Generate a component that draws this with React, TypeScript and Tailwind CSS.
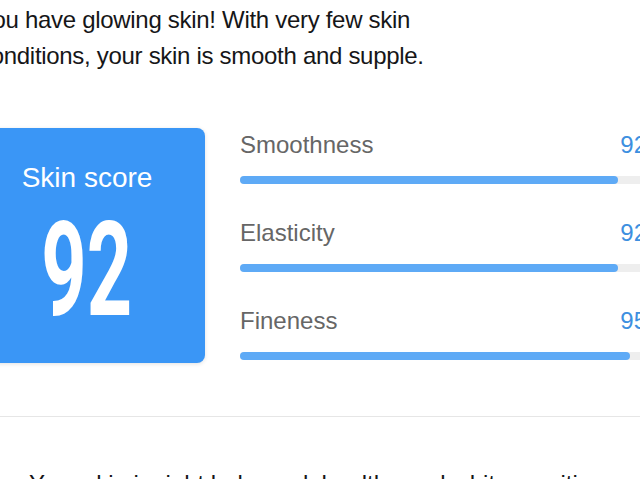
export default function App() {
  const metrics = [
    { label: "Smoothness", value: 92 },
    { label: "Elasticity", value: 92 },
    { label: "Fineness", value: 95 },
  ];

  return (
    <div className="w-[640px] h-[479px] overflow-hidden bg-white font-['Liberation_Sans',Arial,sans-serif]">
      <div className="ml-[-21px] w-[720px]">
        <p className="pt-[2px] text-[24px] leading-[36px] tracking-[-0.3px] text-[#161618] w-[600px]">
          You have glowing skin! With very few skin
          <br />
          conditions, your skin is smooth and supple.
        </p>

        <div className="mt-[54px] -ml-[10px] flex items-start">
          <div className="w-[236px] h-[235px] rounded-[8px] bg-[#3a96f6] shadow-[0_1px_4px_rgba(0,0,0,0.12)] flex flex-col items-center pt-[34px]">
            <span className="text-[28px] leading-[32px] text-white">Skin score</span>
            <span className="mt-[10px] inline-block scale-x-[0.6] text-[132px] leading-none font-bold text-white font-['Roboto',sans-serif]">
              92
            </span>
          </div>

          <div className="ml-[35px] w-[411px] pt-[5px] flex flex-col gap-[37px]">
            {metrics.map((m) => (
              <div key={m.label} className="flex flex-col">
                <div className="flex justify-between items-center h-[24px] text-[24px] leading-[24px] pr-[4px]">
                  <span className="text-[#666666]">{m.label}</span>
                  <span className="text-[#3d8fe0]">{m.value}</span>
                </div>
                <div className="mt-[19px] h-[8px] rounded-full bg-[#eeeeee]">
                  <div
                    className="h-full rounded-full bg-[#5eaaf6]"
                    style={{ width: `${m.value}%` }}
                  />
                </div>
              </div>
            ))}
          </div>
        </div>

        <div className="mt-[53px] h-px bg-[#e6e6e6] w-[720px]" />

        <p className="mt-[49px] ml-[50px] text-[24px] leading-[36px] text-[#161618] whitespace-nowrap">
          Your skin is right balanced, healthy and white, positive
        </p>
      </div>
    </div>
  );
}
